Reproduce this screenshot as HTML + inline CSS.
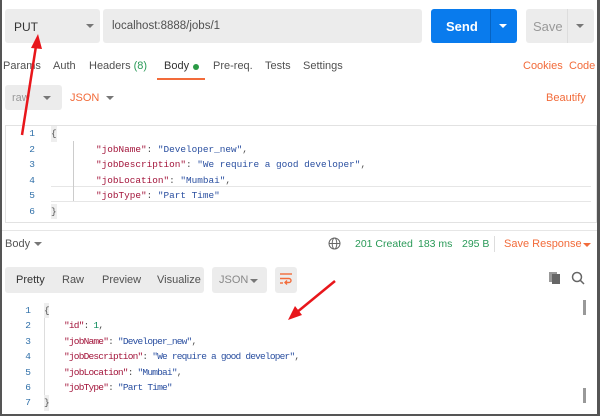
<!DOCTYPE html>
<html><head><style>
*{box-sizing:border-box;margin:0;padding:0}
body{width:600px;height:416px;background:#fff;font-family:"Liberation Sans",sans-serif;font-size:11px;color:#505050;position:relative;overflow:hidden}
.a{position:absolute}
.mono{font-family:"Liberation Mono",monospace;font-size:9.4px}
.k{color:#a3153b}.s{color:#2a4fa0}.n{color:#0a8a5a}
.ln{color:#2f6fa8;text-align:right;font-size:9.5px;letter-spacing:0}
</style></head><body>
<div class="a" style="left:0;top:0;width:2px;height:416px;background:#555"></div>
<div class="a" style="right:0;top:0;width:3px;height:416px;background:#555"></div>
<div class="a" style="left:0;bottom:0;width:600px;height:2px;background:#555"></div>

<div class="a" style="left:5px;top:9px;width:95px;height:34px;background:#ececec;border-radius:3px"></div>
<div class="a" style="left:14px;top:20px;font-size:12px;color:#333">PUT</div>
<div class="a" style="left:86px;top:24px;border:4px solid transparent;border-top:4px solid #777"></div>
<div class="a" style="left:103px;top:9px;width:319px;height:34px;background:#ececec;border-radius:3px"></div>
<div class="a" style="left:112px;top:20px;font-size:11.5px;color:#505050">localhost:8888/jobs/1</div>
<div class="a" style="left:431px;top:9px;width:86px;height:34px;background:#097bed;border-radius:3px"></div>
<div class="a" style="left:446px;top:19px;font-size:13px;font-weight:bold;color:#fff">Send</div>
<div class="a" style="left:490px;top:9px;width:1px;height:34px;background:#0663c2"></div>
<div class="a" style="left:499px;top:24px;border:4px solid transparent;border-top:4px solid #fff"></div>
<div class="a" style="left:526px;top:9px;width:68px;height:34px;background:#ececec;border-radius:3px"></div>
<div class="a" style="left:533px;top:19px;font-size:13px;color:#999">Save</div>
<div class="a" style="left:567px;top:9px;width:1px;height:34px;background:#ddd"></div>
<div class="a" style="left:576px;top:24px;border:4px solid transparent;border-top:4px solid #777"></div>

<div class="a" style="left:3px;top:60px;font-size:11px">Params</div>
<div class="a" style="left:53px;top:60px">Auth</div>
<div class="a" style="left:89px;top:60px">Headers <span style="color:#2a9a58">(8)</span></div>
<div class="a" style="left:164px;top:60px;color:#333">Body</div>
<div class="a" style="left:193px;top:64px;width:6px;height:6px;border-radius:3px;background:#2a9a45"></div>
<div class="a" style="left:157px;top:78px;width:48px;height:2px;background:#f26b3a"></div>
<div class="a" style="left:213px;top:60px">Pre-req.</div>
<div class="a" style="left:265px;top:60px">Tests</div>
<div class="a" style="left:303px;top:60px">Settings</div>
<div class="a" style="left:523px;top:60px;color:#f26b3a">Cookies</div>
<div class="a" style="left:569px;top:60px;color:#f26b3a">Code</div>

<div class="a" style="left:5px;top:85px;width:57px;height:25px;background:#ececec;border-radius:3px"></div>
<div class="a" style="left:12px;top:92px;color:#999">raw</div>
<div class="a" style="left:43px;top:96px;border:4px solid transparent;border-top:4px solid #777"></div>
<div class="a" style="left:70px;top:92px;color:#f26b3a">JSON</div>
<div class="a" style="left:106px;top:96px;border:4px solid transparent;border-top:4px solid #777"></div>
<div class="a" style="left:546px;top:92px;color:#f26b3a">Beautify</div>

<div class="a" style="left:5px;top:125px;width:592px;height:98px;border:1px solid #e2e2e2"></div>
<div class="a" style="left:51px;top:186px;width:540px;height:1px;background:#e6e6e6"></div>
<div class="a" style="left:51px;top:201px;width:540px;height:1px;background:#e6e6e6"></div>
<div class="a" style="left:73px;top:141px;width:1px;height:60px;background:#ccc"></div>
<div class="a mono" style="left:0;top:126px;line-height:15.5px">
<div style="display:flex"><div class="ln" style="width:35px">1</div><div style="margin-left:16px;background:#eee">{</div></div>
<div style="display:flex"><div class="ln" style="width:35px">2</div><div style="margin-left:61px"><span class="k">"jobName"</span>: <span class="s">"Developer_new"</span>,</div></div>
<div style="display:flex"><div class="ln" style="width:35px">3</div><div style="margin-left:61px"><span class="k">"jobDescription"</span>: <span class="s">"We require a good developer"</span>,</div></div>
<div style="display:flex"><div class="ln" style="width:35px">4</div><div style="margin-left:61px"><span class="k">"jobLocation"</span>: <span class="s">"Mumbai"</span>,</div></div>
<div style="display:flex"><div class="ln" style="width:35px">5</div><div style="margin-left:61px"><span class="k">"jobType"</span>: <span class="s">"Part Time"</span></div></div>
<div style="display:flex"><div class="ln" style="width:35px">6</div><div style="margin-left:16px;background:#eee">}</div></div>
</div>

<div class="a" style="left:2px;top:230px;width:595px;height:1px;background:#e6e6e6"></div>
<div class="a" style="left:5px;top:238px;color:#555">Body</div>
<div class="a" style="left:34px;top:242px;border:4px solid transparent;border-top:4px solid #777"></div>
<svg class="a" style="left:328px;top:237px" width="13" height="13" viewBox="0 0 13 13"><circle cx="6.5" cy="6.5" r="5.5" fill="none" stroke="#666"/><ellipse cx="6.5" cy="6.5" rx="2.3" ry="5.5" fill="none" stroke="#666"/><line x1="1" y1="6.5" x2="12" y2="6.5" stroke="#666"/></svg>
<div class="a" style="left:355px;top:238px;color:#2a9a58;font-size:10.5px">201 Created</div>
<div class="a" style="left:418px;top:238px;color:#2a9a58;font-size:10.5px">183 ms</div>
<div class="a" style="left:462px;top:238px;color:#2a9a58;font-size:10.5px">295 B</div>
<div class="a" style="left:494px;top:236px;width:1px;height:16px;background:#ddd"></div>
<div class="a" style="left:504px;top:238px;color:#f26b3a">Save Response</div>
<div class="a" style="left:583px;top:243px;border:4px solid transparent;border-top:4px solid #f26b3a"></div>

<div class="a" style="left:5px;top:267px;width:199px;height:26px;background:#ececec;border-radius:3px"></div>
<div class="a" style="left:16px;top:274px;color:#333">Pretty</div>
<div class="a" style="left:62px;top:274px">Raw</div>
<div class="a" style="left:102px;top:274px">Preview</div>
<div class="a" style="left:157px;top:274px">Visualize</div>
<div class="a" style="left:212px;top:267px;width:55px;height:26px;background:#ececec;border-radius:3px"></div>
<div class="a" style="left:219px;top:274px;color:#888">JSON</div>
<div class="a" style="left:250px;top:279px;border:4px solid transparent;border-top:4px solid #777"></div>
<div class="a" style="left:275px;top:267px;width:22px;height:26px;background:#ececec;border-radius:3px"></div>
<svg class="a" style="left:279px;top:272px" width="14" height="14" viewBox="0 0 14 14" fill="none" stroke="#f26b3a" stroke-width="1.4"><line x1="1" y1="2" x2="13" y2="2"/><path d="M1 6.5H10a2 2 0 0 1 0 4H6"/><path d="M8 8.5L6 10.5 8 12.5"/><line x1="1" y1="11" x2="4" y2="11"/></svg>
<svg class="a" style="left:548px;top:271px" width="14" height="14" viewBox="0 0 14 14"><rect x="1" y="1" width="8" height="10" fill="#999"/><rect x="4" y="3" width="8" height="10" fill="#666"/></svg>
<svg class="a" style="left:571px;top:271px" width="14" height="14" viewBox="0 0 14 14" fill="none" stroke="#666" stroke-width="1.5"><circle cx="6" cy="6" r="4.5"/><line x1="9.3" y1="9.3" x2="13" y2="13"/></svg>

<div class="a" style="left:44px;top:303px;width:1px;height:102px;background:#ddd"></div>
<div class="a" style="left:583px;top:300px;width:3px;height:15px;background:#999"></div>
<div class="a" style="left:583px;top:388px;width:3px;height:15px;background:#999"></div>
<div class="a mono" style="left:0;top:303px;line-height:15.4px;font-size:9.5px;letter-spacing:-0.8px">
<div style="display:flex"><div class="ln" style="width:31px">1</div><div style="margin-left:13px;background:#eee">{</div></div>
<div style="display:flex"><div class="ln" style="width:31px">2</div><div style="margin-left:33px"><span class="k">"id"</span>: <span class="n">1</span>,</div></div>
<div style="display:flex"><div class="ln" style="width:31px">3</div><div style="margin-left:33px"><span class="k">"jobName"</span>: <span class="s">"Developer_new"</span>,</div></div>
<div style="display:flex"><div class="ln" style="width:31px">4</div><div style="margin-left:33px"><span class="k">"jobDescription"</span>: <span class="s">"We require a good developer"</span>,</div></div>
<div style="display:flex"><div class="ln" style="width:31px">5</div><div style="margin-left:33px"><span class="k">"jobLocation"</span>: <span class="s">"Mumbai"</span>,</div></div>
<div style="display:flex"><div class="ln" style="width:31px">6</div><div style="margin-left:33px"><span class="k">"jobType"</span>: <span class="s">"Part Time"</span></div></div>
<div style="display:flex"><div class="ln" style="width:31px">7</div><div style="margin-left:13px;background:#eee">}</div></div>
</div>

<svg class="a" style="left:0;top:0" width="600" height="416">
<line x1="22" y1="135" x2="36" y2="46" stroke="#e8161b" stroke-width="2.5"/>
<polygon points="38,34 31,48 42,49" fill="#e8161b"/>
<line x1="335" y1="281" x2="296" y2="313" stroke="#e8161b" stroke-width="2.5"/>
<polygon points="288,320 295,306 302,315" fill="#e8161b"/>
</svg>
</body></html>
